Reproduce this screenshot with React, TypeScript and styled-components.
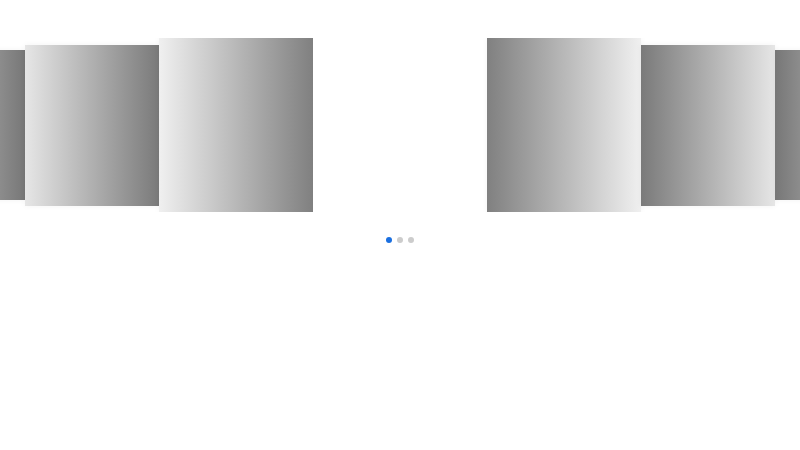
import { FC } from 'react';
import styled, { createGlobalStyle } from 'styled-components';

const GlobalStyle = createGlobalStyle`
  html, body {
    margin: 0;
    padding: 0;
    background: #ffffff;
    font-family: "Liberation Sans", Arial, sans-serif;
  }
`;

const Page = styled.div`
  width: 800px;
  height: 450px;
  overflow: hidden;
  background: #fff;
`;

const Track = styled.div`
  display: flex;
  justify-content: center;
  align-items: center;
  height: 174px;
  margin-top: 38px;
  overflow: hidden;
`;

type Side = 'left' | 'right' | 'center';

const Slide = styled.div<{ $w: number; $h: number; $side: Side; $light: string; $dark: string }>`
  flex-shrink: 0;
  width: ${p => p.$w}px;
  height: ${p => p.$h}px;
  background: ${p =>
    p.$side === 'center'
      ? '#ffffff'
      : `linear-gradient(${p.$side === 'left' ? 'to right' : 'to left'}, ${p.$light}, ${p.$dark})`};
  box-shadow: ${p => (p.$side === 'center' ? 'none' : '0 0 6px rgba(0, 0, 0, 0.05)')};
`;

const Dots = styled.div`
  display: flex;
  justify-content: center;
  gap: 5px;
  margin-top: 25px;
`;

const Dot = styled.span<{ $active?: boolean }>`
  width: 6px;
  height: 6px;
  border-radius: 50%;
  background: ${p => (p.$active ? '#1a6fe0' : '#cccccc')};
`;

const slides: { w: number; h: number; side: Side; light: string; dark: string }[] = [
  { w: 114, h: 150, side: 'left', light: '#d8d8d8', dark: '#777777' },
  { w: 134, h: 161, side: 'left', light: '#e6e6e6', dark: '#7a7a7a' },
  { w: 154, h: 174, side: 'left', light: '#f0f0f0', dark: '#808080' },
  { w: 174, h: 174, side: 'center', light: '#fff', dark: '#fff' },
  { w: 154, h: 174, side: 'right', light: '#f0f0f0', dark: '#808080' },
  { w: 134, h: 161, side: 'right', light: '#e6e6e6', dark: '#7a7a7a' },
  { w: 114, h: 150, side: 'right', light: '#d8d8d8', dark: '#777777' },
];

const App: FC = () => (
  <Page>
    <GlobalStyle />
    <Track>
      {slides.map((s, i) => (
        <Slide key={i} $w={s.w} $h={s.h} $side={s.side} $light={s.light} $dark={s.dark} />
      ))}
    </Track>
    <Dots>
      <Dot $active />
      <Dot />
      <Dot />
    </Dots>
  </Page>
);

export default App;
